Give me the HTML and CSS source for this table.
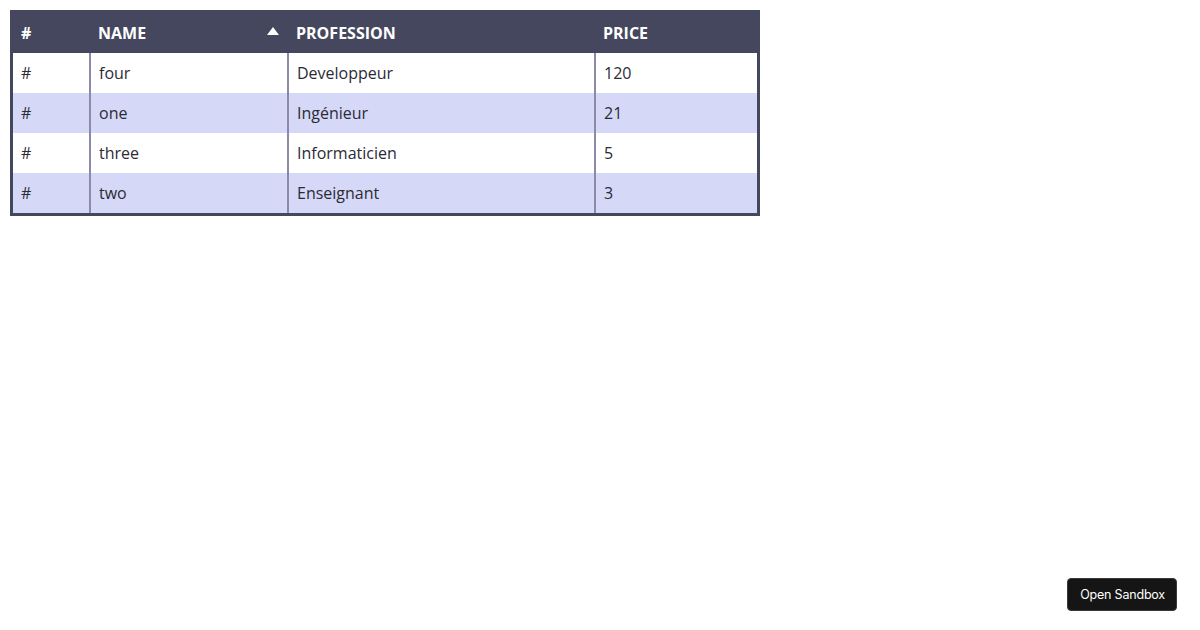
FILE: index.html
```html
<!DOCTYPE html>
<html lang="fr">
<head>
<meta charset="utf-8">
<title>Table</title>
<link rel="stylesheet" href="styles.css">
</head>
<body>
<table class="grid">
  <colgroup>
    <col class="c1"><col class="c2"><col class="c3"><col class="c4">
  </colgroup>
  <thead>
    <tr>
      <th>#</th>
      <th class="sorted"><span>NAME</span><svg class="arrow" width="12" height="8" viewBox="0 0 12 8"><polygon points="6,0 12,8 0,8" fill="#ffffff"/></svg></th>
      <th>PROFESSION</th>
      <th>PRICE</th>
    </tr>
  </thead>
  <tbody>
    <tr><td>#</td><td>four</td><td>Developpeur</td><td>120</td></tr>
    <tr class="alt"><td>#</td><td>one</td><td>Ingénieur</td><td>21</td></tr>
    <tr><td>#</td><td>three</td><td>Informaticien</td><td>5</td></tr>
    <tr class="alt"><td>#</td><td>two</td><td>Enseignant</td><td>3</td></tr>
  </tbody>
</table>
<button class="sandbox">Open Sandbox</button>
</body>
</html>
```

FILE: styles.css
```css
html, body {
  margin: 0;
  padding: 0;
  background: #ffffff;
}
body {
  padding: 10px;
  font-family: "Open Sans", "Noto Sans", sans-serif;
  font-size: 16px;
  color: #2b2b35;
}
.grid {
  border-collapse: separate;
  border-spacing: 0;
  table-layout: fixed;
  width: 750px;
  border: 3px solid #45475e;
  border-top: 0;
}
.c1 { width: 76px; }
.c2 { width: 198px; }
.c3 { width: 307px; }
.c4 { width: 163px; }
.grid th {
  background: #45475e;
  color: #ffffff;
  font-weight: 700;
  text-align: left;
  height: 43px;
  padding: 2px 8px 0 7px;
  box-sizing: border-box;
  line-height: 24px;
  vertical-align: middle;
  border-left: 2px solid #45475e;
}
.grid th:first-child,
.grid td:first-child {
  border-left: 0;
}
.grid th:first-child {
  padding-left: 8px;
}
.grid th.sorted {
  position: relative;
}
.grid th .arrow {
  position: absolute;
  right: 8px;
  top: 17px;
}
.grid td {
  height: 40px;
  padding: 0 8px;
  box-sizing: border-box;
  line-height: 24px;
  vertical-align: middle;
  border-left: 2px solid #8b8aa8;
  background: #ffffff;
}
.grid tr.alt td {
  background: #d6d8f7;
}
.sandbox {
  position: fixed;
  right: 23px;
  bottom: 19px;
  height: 33px;
  padding: 0 11px 0 12px;
  background: #151515;
  color: #ffffff;
  border: 1px solid #3a3a3a;
  border-radius: 4px;
  font-family: Inter, "Liberation Sans", sans-serif;
  font-size: 12.5px;
  letter-spacing: -0.2px;
}
```
